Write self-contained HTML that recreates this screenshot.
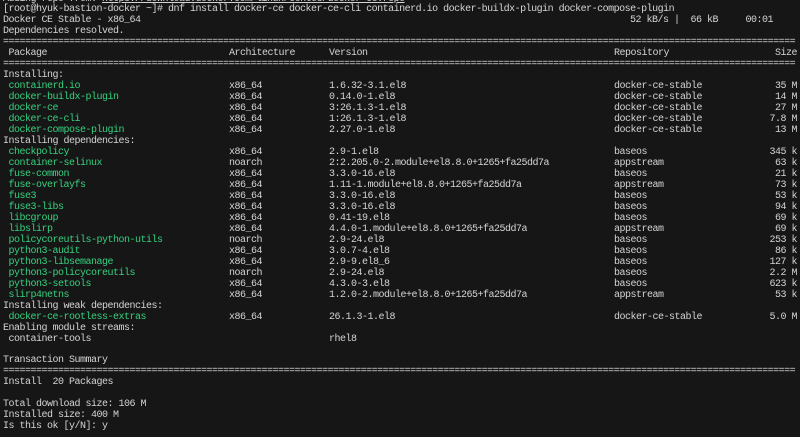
<!DOCTYPE html>
<html><head><meta charset="utf-8"><style>
html,body{margin:0;padding:0;background:#161616;width:800px;height:437px;overflow:hidden}
#t{position:absolute;left:0;top:-5.5px;width:800px;font-family:"Liberation Mono","DejaVu Sans Mono",monospace;font-size:10px;letter-spacing:-0.5px;color:#d4d4d4}
.l{position:relative;height:10.97px;line-height:10.97px;white-space:pre}
.l span{position:absolute;top:0}
.n{left:3px}
.g{color:#36d17f}
.a{left:229px}.v{left:329px}.p{left:614px}.s{right:3px}
u{text-decoration:underline}
</style></head><body><div id="t">
<div class="l"><span class="n">Adding repo from: <u>https://download.docker.com/linux/centos/docker-ce.repo</u></span></div>
<div class="l"><span class="n">[root@hyuk-bastion-docker ~]# dnf install docker-ce docker-ce-cli containerd.io docker-buildx-plugin docker-compose-plugin</span></div>
<div class="l"><span class="n">Docker CE Stable - x86_64</span><span style="right:27px">52 kB/s |  66 kB     00:01</span></div>
<div class="l"><span class="n">Dependencies resolved.</span></div>
<div class="l"><span class="n">================================================================================================================================================</span></div>
<div class="l"><span class="n"> Package</span><span class="a">Architecture</span><span class="v">Version</span><span class="p">Repository</span><span class="s">Size</span></div>
<div class="l"><span class="n">================================================================================================================================================</span></div>
<div class="l"><span class="n">Installing:</span></div>
<div class="l"><span class="n g"> containerd.io</span><span class="a">x86_64</span><span class="v">1.6.32-3.1.el8</span><span class="p">docker-ce-stable</span><span class="s">35 M</span></div>
<div class="l"><span class="n g"> docker-buildx-plugin</span><span class="a">x86_64</span><span class="v">0.14.0-1.el8</span><span class="p">docker-ce-stable</span><span class="s">14 M</span></div>
<div class="l"><span class="n g"> docker-ce</span><span class="a">x86_64</span><span class="v">3:26.1.3-1.el8</span><span class="p">docker-ce-stable</span><span class="s">27 M</span></div>
<div class="l"><span class="n g"> docker-ce-cli</span><span class="a">x86_64</span><span class="v">1:26.1.3-1.el8</span><span class="p">docker-ce-stable</span><span class="s">7.8 M</span></div>
<div class="l"><span class="n g"> docker-compose-plugin</span><span class="a">x86_64</span><span class="v">2.27.0-1.el8</span><span class="p">docker-ce-stable</span><span class="s">13 M</span></div>
<div class="l"><span class="n">Installing dependencies:</span></div>
<div class="l"><span class="n g"> checkpolicy</span><span class="a">x86_64</span><span class="v">2.9-1.el8</span><span class="p">baseos</span><span class="s">345 k</span></div>
<div class="l"><span class="n g"> container-selinux</span><span class="a">noarch</span><span class="v">2:2.205.0-2.module+el8.8.0+1265+fa25dd7a</span><span class="p">appstream</span><span class="s">63 k</span></div>
<div class="l"><span class="n g"> fuse-common</span><span class="a">x86_64</span><span class="v">3.3.0-16.el8</span><span class="p">baseos</span><span class="s">21 k</span></div>
<div class="l"><span class="n g"> fuse-overlayfs</span><span class="a">x86_64</span><span class="v">1.11-1.module+el8.8.0+1265+fa25dd7a</span><span class="p">appstream</span><span class="s">73 k</span></div>
<div class="l"><span class="n g"> fuse3</span><span class="a">x86_64</span><span class="v">3.3.0-16.el8</span><span class="p">baseos</span><span class="s">53 k</span></div>
<div class="l"><span class="n g"> fuse3-libs</span><span class="a">x86_64</span><span class="v">3.3.0-16.el8</span><span class="p">baseos</span><span class="s">94 k</span></div>
<div class="l"><span class="n g"> libcgroup</span><span class="a">x86_64</span><span class="v">0.41-19.el8</span><span class="p">baseos</span><span class="s">69 k</span></div>
<div class="l"><span class="n g"> libslirp</span><span class="a">x86_64</span><span class="v">4.4.0-1.module+el8.8.0+1265+fa25dd7a</span><span class="p">appstream</span><span class="s">69 k</span></div>
<div class="l"><span class="n g"> policycoreutils-python-utils</span><span class="a">noarch</span><span class="v">2.9-24.el8</span><span class="p">baseos</span><span class="s">253 k</span></div>
<div class="l"><span class="n g"> python3-audit</span><span class="a">x86_64</span><span class="v">3.0.7-4.el8</span><span class="p">baseos</span><span class="s">86 k</span></div>
<div class="l"><span class="n g"> python3-libsemanage</span><span class="a">x86_64</span><span class="v">2.9-9.el8_6</span><span class="p">baseos</span><span class="s">127 k</span></div>
<div class="l"><span class="n g"> python3-policycoreutils</span><span class="a">noarch</span><span class="v">2.9-24.el8</span><span class="p">baseos</span><span class="s">2.2 M</span></div>
<div class="l"><span class="n g"> python3-setools</span><span class="a">x86_64</span><span class="v">4.3.0-3.el8</span><span class="p">baseos</span><span class="s">623 k</span></div>
<div class="l"><span class="n g"> slirp4netns</span><span class="a">x86_64</span><span class="v">1.2.0-2.module+el8.8.0+1265+fa25dd7a</span><span class="p">appstream</span><span class="s">53 k</span></div>
<div class="l"><span class="n">Installing weak dependencies:</span></div>
<div class="l"><span class="n g"> docker-ce-rootless-extras</span><span class="a">x86_64</span><span class="v">26.1.3-1.el8</span><span class="p">docker-ce-stable</span><span class="s">5.0 M</span></div>
<div class="l"><span class="n">Enabling module streams:</span></div>
<div class="l"><span class="n"> container-tools</span><span class="v">rhel8</span></div>
<div class="l"></div>
<div class="l"><span class="n">Transaction Summary</span></div>
<div class="l"><span class="n">================================================================================================================================================</span></div>
<div class="l"><span class="n">Install  20 Packages</span></div>
<div class="l"></div>
<div class="l"><span class="n">Total download size: 106 M</span></div>
<div class="l"><span class="n">Installed size: 400 M</span></div>
<div class="l"><span class="n">Is this ok [y/N]: y</span></div>
</div></body></html>
